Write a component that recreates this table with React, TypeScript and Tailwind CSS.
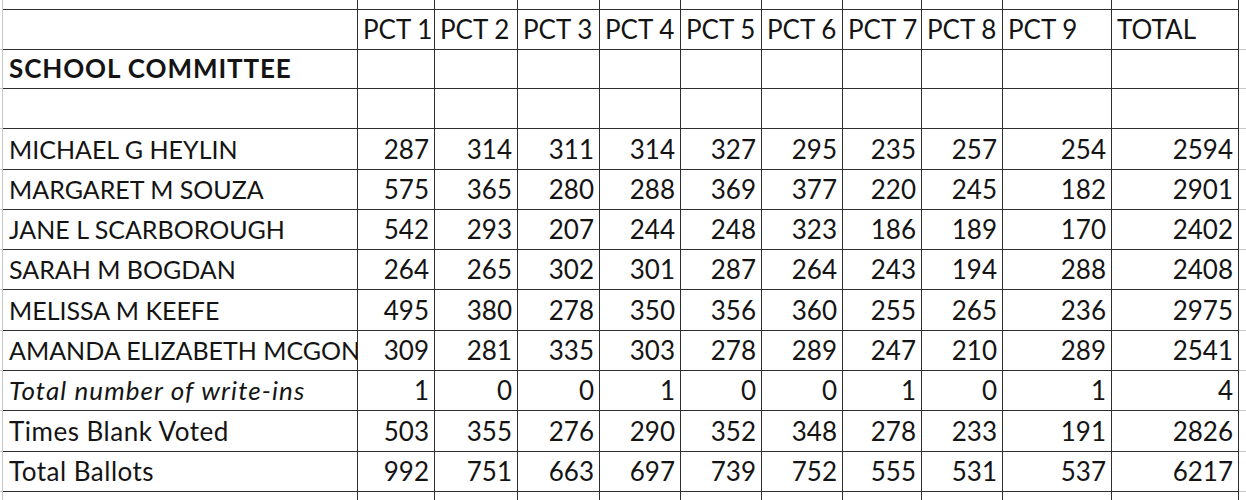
const cols = ['PCT 1', 'PCT 2', 'PCT 3', 'PCT 4', 'PCT 5', 'PCT 6', 'PCT 7', 'PCT 8', 'PCT 9', 'TOTAL'];

type Row = {
  label: string;
  values?: (number | string)[];
  labelClass?: string;
  header?: boolean;
  h: string;
};

const rows: Row[] = [
  { label: '', values: cols, header: true, h: 'h-[40px]' },
  { label: 'SCHOOL COMMITTEE', labelClass: 'font-bold text-[26px] tracking-[0.9px]', h: 'h-[39px]' },
  { label: '', h: 'h-[40px]' },
  { label: 'MICHAEL G HEYLIN', values: [287, 314, 311, 314, 327, 295, 235, 257, 254, 2594], h: 'h-[41px]' },
  { label: 'MARGARET M SOUZA', values: [575, 365, 280, 288, 369, 377, 220, 245, 182, 2901], h: 'h-[40px]' },
  { label: 'JANE L SCARBOROUGH', values: [542, 293, 207, 244, 248, 323, 186, 189, 170, 2402], h: 'h-[40px]' },
  { label: 'SARAH M BOGDAN', values: [264, 265, 302, 301, 287, 264, 243, 194, 288, 2408], h: 'h-[40px]' },
  { label: 'MELISSA M KEEFE', values: [495, 380, 278, 350, 356, 360, 255, 265, 236, 2975], h: 'h-[41px]' },
  { label: 'AMANDA ELIZABETH MCGONIGLE', values: [309, 281, 335, 303, 278, 289, 247, 210, 289, 2541], h: 'h-[40px]' },
  { label: 'Total number of write-ins', labelClass: 'italic text-[26px] tracking-[1.1px]', values: [1, 0, 0, 1, 0, 0, 1, 0, 1, 4], h: 'h-[40px]' },
  { label: 'Times Blank Voted', labelClass: 'text-[26px] tracking-[0.5px]', values: [503, 355, 276, 290, 352, 348, 278, 233, 191, 2826], h: 'h-[41px]' },
  { label: 'Total Ballots', labelClass: 'text-[26px] tracking-[0.5px]', values: [992, 751, 663, 697, 739, 752, 555, 531, 537, 6217], h: 'h-[40px]' },
];

const colWidths = ['w-[77px]', 'w-[83px]', 'w-[82px]', 'w-[81px]', 'w-[81px]', 'w-[81px]', 'w-[79px]', 'w-[81px]', 'w-[109px]', 'w-[127px]'];

const line = 'border-[#2e2e2e]';

function SheetRow({ row }: { row: Row }) {
  return (
    <div className={`flex ${row.h}`}>
      <div className="w-[3px] shrink-0 border-r border-b border-r-[#c8c8c8] border-b-[#c8c8c8]" />
      <div
        className={`w-[355px] shrink-0 overflow-hidden whitespace-nowrap border-r border-b ${line} flex items-end pl-[6px] pb-[7px] ${
          row.labelClass ?? 'text-[25px]'
        }`}
      >
        {row.label}
      </div>
      {colWidths.map((w, i) => (
        <div
          key={i}
          className={`${w} shrink-0 border-r border-b ${line} flex items-end pb-[7px] whitespace-nowrap ${
            row.header ? 'justify-start pl-[5px]' : 'justify-end pr-[5px]'
          }`}
        >
          {row.values ? row.values[i] : ''}
        </div>
      ))}
      <div className="flex-1 border-b border-b-[#c8c8c8]" />
    </div>
  );
}

export default function App() {
  return (
    <div
      className="w-[1246px] h-[500px] overflow-hidden bg-white text-[26px] leading-none text-[#141414]"
      style={{ fontFamily: 'Lato, "Liberation Sans", sans-serif' }}
    >
      <div className="flex h-[10px]">
        <div className="w-[3px] shrink-0 border-r border-r-[#c8c8c8]" />
        <div className={`w-[355px] shrink-0 border-r border-b ${line}`} />
        {colWidths.map((w, i) => (
          <div key={i} className={`${w} shrink-0 border-r border-b ${line}`} />
        ))}
        <div className="flex-1" />
      </div>
      {rows.map((r, i) => (
        <SheetRow key={i} row={r} />
      ))}
      <div className="flex h-[8px]">
        <div className="w-[3px] shrink-0 border-r border-r-[#c8c8c8]" />
        <div className={`w-[355px] shrink-0 border-r ${line}`} />
        {colWidths.map((w, i) => (
          <div key={i} className={`${w} shrink-0 border-r ${line}`} />
        ))}
        <div className="flex-1" />
      </div>
    </div>
  );
}
